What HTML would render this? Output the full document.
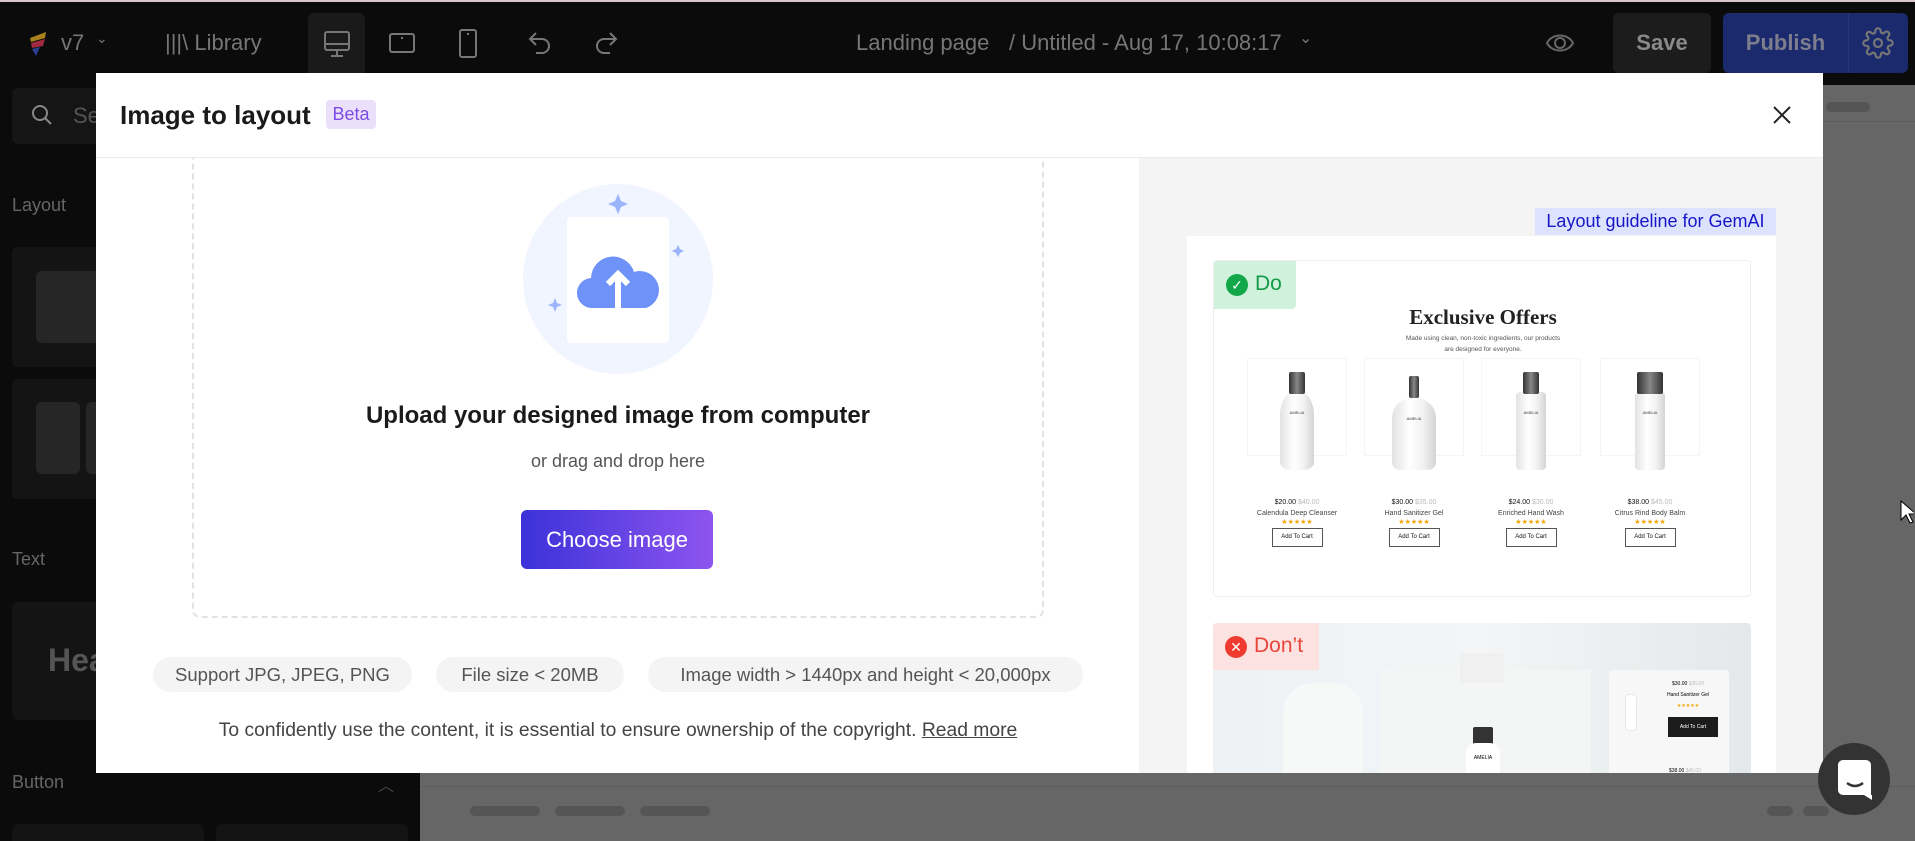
<!DOCTYPE html>
<html style="overflow:hidden;width:1915px;height:841px"><head><meta charset="utf-8"><style>
*{box-sizing:border-box;margin:0;padding:0}
body{width:1915px;height:841px;overflow:hidden;background:#0b0b0b;font-family:"Liberation Sans",sans-serif;position:relative}
.a{position:absolute}
.tb{color:#767676;font-size:22px}
.pill{position:absolute;top:657px;height:35px;border-radius:18px;background:#f4f4f4;color:#555;font-size:18.5px;line-height:35px;text-align:center}
.col{position:absolute;width:102px;text-align:center}
.bot{margin:0 auto;width:34px;height:78px;background:linear-gradient(90deg,#e2e2e2,#fff 40%,#f2f2f2 70%,#d4d4d4);border-radius:12px 12px 6px 6px;position:relative;margin-top:20px;font-size:4px;color:#333;padding-top:18px}
.cap{position:absolute;left:50%;top:-20px;width:16px;height:22px;margin-left:-8px;background:linear-gradient(90deg,#333,#888,#333);border-radius:2px}
.pr{font-size:7px;color:#111;margin-top:29px}
.pr s{color:#bbb;text-decoration:none}
.nm{font-size:7px;color:#444;margin-top:4px}
.st{font-size:7px;color:#f5a400;margin-top:1px}
.btn{margin:2px auto 0;width:51px;height:19px;border:1px solid #555;font-size:6px;line-height:17px;color:#111}
.sb{position:absolute;left:12px;width:400px;background:#141414;border-radius:6px}
.sl{position:absolute;left:12px;color:#666;font-size:18px}
</style></head><body>
<div class="a" style="left:0;top:0;width:1915px;height:2px;background:#d8c8cc"></div>
<!-- top bar -->
<div class="a" style="left:28px;top:30px;width:18px;height:28px">
<svg width="20" height="30" viewBox="0 0 20 30"><path d="M2 8 L18 2 L17 8 L3 12Z" fill="#a8821c"/><path d="M3 13 L17 9 L15 16 L4 18Z" fill="#a02a40"/><path d="M4 19 L12 17 L8 26Z" fill="#2a3f8f"/></svg></div>
<div class="a tb" style="left:61px;top:30px">v7</div>
<div class="a tb" style="left:96px;top:30px;font-size:14px">⌄</div>
<div class="a tb" style="left:165px;top:30px">|||\ Library</div>
<div class="a" style="left:308px;top:13px;width:57px;height:60px;background:#1a1a1a;border-radius:6px 6px 0 0"></div>
<svg class="a" style="left:322px;top:29px" width="30" height="30" viewBox="0 0 30 30" fill="none" stroke="#777" stroke-width="2"><rect x="3" y="3" width="24" height="18" rx="2"/><path d="M3 15H27M15 21V26M9 27H21"/></svg>
<svg class="a" style="left:388px;top:29px" width="28" height="28" viewBox="0 0 28 28" fill="none" stroke="#777" stroke-width="2"><rect x="2" y="5" width="24" height="18" rx="2"/><path d="M13 9h2"/></svg>
<svg class="a" style="left:456px;top:28px" width="24" height="32" viewBox="0 0 24 32" fill="none" stroke="#777" stroke-width="2"><rect x="4" y="2" width="16" height="27" rx="2"/><path d="M11 6h2"/></svg>
<svg class="a" style="left:526px;top:29px" width="28" height="28" viewBox="0 0 28 28" fill="none" stroke="#777" stroke-width="2"><path d="M10 4 L4 10 L10 16M4 10H16a7 7 0 0 1 0 14H10"/></svg>
<svg class="a" style="left:592px;top:29px" width="28" height="28" viewBox="0 0 28 28" fill="none" stroke="#777" stroke-width="2"><path d="M18 4 L24 10 L18 16M24 10H12a7 7 0 0 0 0 14H18"/></svg>
<div class="a tb" style="left:856px;top:30px">Landing page</div>
<div class="a tb" style="left:1009px;top:30px">/ Untitled - Aug 17, 10:08:17</div>
<div class="a tb" style="left:1299px;top:28px;font-size:16px">⌄</div>
<svg class="a" style="left:1545px;top:30px" width="30" height="26" viewBox="0 0 30 26" fill="none" stroke="#666" stroke-width="2"><path d="M2 13C7 3 23 3 28 13C23 23 7 23 2 13Z"/><circle cx="15" cy="13" r="5"/></svg>
<div class="a" style="left:1613px;top:13px;width:98px;height:60px;background:#1c1c1c;border-radius:6px;color:#8a8a8a;font-size:22px;font-weight:bold;line-height:60px;text-align:center">Save</div>
<div class="a" style="left:1723px;top:13px;width:185px;height:60px;background:#1a2a6c;border-radius:6px"></div>
<div class="a" style="left:1848px;top:13px;width:1px;height:60px;background:#23357e"></div>
<div class="a" style="left:1723px;top:13px;width:125px;height:60px;color:#7d7d8d;font-size:22px;font-weight:bold;line-height:60px;text-align:center">Publish</div>
<svg class="a" style="left:1862px;top:27px" width="32" height="32" viewBox="0 0 24 24" fill="none" stroke="#777" stroke-width="1.6"><circle cx="12" cy="12" r="3"/><path d="M19.4 15a1.6 1.6 0 0 0 .3 1.8l.1.1a2 2 0 1 1-2.8 2.8l-.1-.1a1.6 1.6 0 0 0-1.8-.3 1.6 1.6 0 0 0-1 1.5V21a2 2 0 1 1-4 0v-.1a1.6 1.6 0 0 0-1-1.5 1.6 1.6 0 0 0-1.8.3l-.1.1a2 2 0 1 1-2.8-2.8l.1-.1a1.6 1.6 0 0 0 .3-1.8 1.6 1.6 0 0 0-1.5-1H3a2 2 0 1 1 0-4h.1a1.6 1.6 0 0 0 1.5-1 1.6 1.6 0 0 0-.3-1.8l-.1-.1a2 2 0 1 1 2.8-2.8l.1.1a1.6 1.6 0 0 0 1.8.3H9a1.6 1.6 0 0 0 1-1.5V3a2 2 0 1 1 4 0v.1a1.6 1.6 0 0 0 1 1.5 1.6 1.6 0 0 0 1.8-.3l.1-.1a2 2 0 1 1 2.8 2.8l-.1.1a1.6 1.6 0 0 0-.3 1.8V9a1.6 1.6 0 0 0 1.5 1H21a2 2 0 1 1 0 4h-.1a1.6 1.6 0 0 0-1.5 1z"/></svg>
<!-- sidebar -->
<div class="a" style="left:12px;top:88px;width:400px;height:56px;background:#151515;border-radius:6px"></div>
<svg class="a" style="left:30px;top:103px" width="24" height="24" viewBox="0 0 24 24" fill="none" stroke="#888" stroke-width="2"><circle cx="10" cy="10" r="7"/><path d="M15 15l6 6"/></svg>
<div class="a tb" style="left:73px;top:103px;color:#555">Se</div>
<div class="sl" style="top:195px">Layout</div>
<div class="sb" style="top:247px;height:120px"></div>
<div class="a" style="left:36px;top:271px;width:80px;height:72px;background:#262626;border-radius:6px"></div>
<div class="sb" style="top:379px;height:120px"></div>
<div class="a" style="left:36px;top:402px;width:44px;height:72px;background:#262626;border-radius:6px"></div>
<div class="a" style="left:86px;top:402px;width:20px;height:72px;background:#262626;border-radius:6px"></div>
<div class="sl" style="top:549px">Text</div>
<div class="sb" style="top:602px;height:118px"></div>
<div class="a" style="left:48px;top:642px;color:#555;font-size:32px;font-weight:bold">Hea</div>
<div class="sl" style="top:772px">Button</div>
<div class="a" style="left:378px;top:772px;color:#444;font-size:16px">︿</div>
<div class="a" style="left:12px;top:824px;width:192px;height:17px;background:#141414;border-radius:6px 6px 0 0"></div>
<div class="a" style="left:216px;top:824px;width:192px;height:17px;background:#141414;border-radius:6px 6px 0 0"></div>
<!-- canvas -->
<div class="a" style="left:420px;top:85px;width:1495px;height:756px;background:#666"></div>
<div class="a" style="left:420px;top:121px;width:1495px;height:1px;background:#5c5c5c"></div>
<div class="a" style="left:1826px;top:102px;width:44px;height:10px;background:#555;border-radius:5px"></div>
<div class="a" style="left:420px;top:786px;width:1495px;height:1px;background:#5c5c5c"></div>
<div class="a" style="left:470px;top:806px;width:70px;height:10px;background:#555;border-radius:5px"></div>
<div class="a" style="left:555px;top:806px;width:70px;height:10px;background:#555;border-radius:5px"></div>
<div class="a" style="left:640px;top:806px;width:70px;height:10px;background:#555;border-radius:5px"></div>
<div class="a" style="left:1767px;top:806px;width:26px;height:10px;background:#555;border-radius:5px"></div>
<div class="a" style="left:1803px;top:806px;width:26px;height:10px;background:#555;border-radius:5px"></div>
<!-- modal -->
<div class="a" style="left:96px;top:73px;width:1727px;height:700px;background:#fff;overflow:hidden">
 <div class="a" style="left:24px;top:27px;font-size:26px;color:#1a1a1a;font-weight:600">Image to layout</div>
 <div class="a" style="left:230px;top:27px;width:50px;height:29px;background:#ebe0fb;border-radius:4px;color:#7c4ce8;font-size:18px;line-height:29px;text-align:center">Beta</div>
 <svg class="a" style="left:1674px;top:30px" width="24" height="24" viewBox="0 0 24 24" stroke="#222" stroke-width="2"><path d="M4 4L20 20M20 4L4 20"/></svg>
 <div class="a" style="left:0;top:84px;width:1727px;height:1px;background:#ebebeb"></div>
 <div class="a" style="left:96px;top:40px;width:852px;height:505px;border:2px dashed #e2e2e2;border-top:none;border-radius:8px;clip-path:inset(45px -5px -5px -5px)"></div>
 <div class="a" style="left:1043px;top:85px;width:684px;height:615px;background:#f4f4f4"></div>
</div>
<!-- upload -->
<div class="a" style="left:523px;top:184px;width:190px;height:190px;border-radius:50%;background:#f1f5ff"></div>
<div class="a" style="left:567px;top:217px;width:102px;height:126px;background:#fff;border-radius:4px"></div>
<svg class="a" style="left:575px;top:246px" width="88" height="66" viewBox="0 0 88 66"><path d="M18 62a15 15 0 0 1-2-30a22 22 0 0 1 43-6a17 17 0 0 1 12 36Z" fill="#6e92f8"/><path d="M43 62V30M33 38L43 28L53 38" stroke="#fff" stroke-width="6" fill="none"/></svg>
<svg class="a" style="left:0;top:0" width="800" height="400"><g fill="#9bb4fb"><path d="M618 194l3 7 7 3-7 3-3 7-3-7-7-3 7-3z"/><path d="M678 245l2 4 4 2-4 2-2 4-2-4-4-2 4-2z"/><path d="M555 298l2 5 5 2-5 2-2 5-2-5-5-2 5-2z"/></g></svg>
<div class="a" style="left:260px;top:402px;width:716px;text-align:center;font-size:24px;font-weight:bold;color:#1a1a1a">Upload your designed image from computer</div>
<div class="a" style="left:260px;top:451px;width:716px;text-align:center;font-size:18px;color:#555">or drag and drop here</div>
<div class="a" style="left:521px;top:510px;width:192px;height:59px;border-radius:6px;background:linear-gradient(90deg,#3b32d8,#8e54f0);color:#fff;font-size:22px;line-height:59px;text-align:center">Choose image</div>
<div class="pill" style="left:153px;width:259px">Support JPG, JPEG, PNG</div>
<div class="pill" style="left:436px;width:188px">File size &lt; 20MB</div>
<div class="pill" style="left:648px;width:435px">Image width &gt; 1440px and height &lt; 20,000px</div>
<div class="a" style="left:100px;top:720px;width:1036px;text-align:center;font-size:19.3px;color:#444">To confidently use the content, it is essential to ensure ownership of the copyright. <u>Read more</u></div>
<!-- right panel -->
<div class="a" style="left:1535px;top:208px;width:241px;height:27px;background:#dde3fc;color:#1616c8;font-size:18px;line-height:27px;text-align:center">Layout guideline for GemAI</div>
<div class="a" style="left:1187px;top:236px;width:589px;height:537px;background:#fff;overflow:hidden">
 <div class="a" style="left:26px;top:24px;width:538px;height:337px;border:1px solid #eee;border-radius:4px;overflow:hidden">
  <div class="a" style="left:0;top:0;width:82px;height:48px;background:#d0f2dc;border-radius:0 0 4px 0"></div>
  <div class="a" style="left:12px;top:13px;width:22px;height:22px;border-radius:50%;background:#12a84a;color:#fff;font-size:14px;line-height:22px;text-align:center">✓</div>
  <div class="a" style="left:41px;top:11px;font-size:21px;color:#139b47">Do</div>
  <div class="a" style="left:0;top:44px;width:538px;text-align:center;font-family:'Liberation Serif',serif;font-weight:bold;font-size:21px;color:#222">Exclusive Offers</div>
  <div class="a" style="left:0;top:72px;width:538px;text-align:center;font-size:6.5px;color:#555;line-height:11px">Made using clean, non-toxic ingredients, our products<br>are designed for everyone.</div>
  <div class="a" style="left:33px;top:97px;width:100px;height:98px;border:1px solid #f5f5f5"></div>
  <div class="a" style="left:150px;top:97px;width:100px;height:98px;border:1px solid #f5f5f5"></div>
  <div class="a" style="left:267px;top:97px;width:100px;height:98px;border:1px solid #f5f5f5"></div>
  <div class="a" style="left:386px;top:97px;width:100px;height:98px;border:1px solid #f5f5f5"></div>
  <div class="col" style="left:32px;top:111px"><div class="bot" style="border-radius:40% 40% 30% 30%/30% 30% 10% 10%">AMELIA</div><div class="cap" style="top:0"></div><div class="pr">$20.00 <s>$40.00</s></div><div class="nm">Calendula Deep Cleanser</div><div class="st">★★★★★</div><div class="btn">Add To Cart</div></div>
  <div class="col" style="left:149px;top:111px"><div class="bot" style="width:44px;height:72px;margin-top:26px;border-radius:20px 20px 8px 8px">AMELIA</div><div class="cap" style="top:4px;width:10px;margin-left:-5px"></div><div class="pr">$30.00 <s>$35.00</s></div><div class="nm">Hand Sanitizer Gel</div><div class="st">★★★★★</div><div class="btn">Add To Cart</div></div>
  <div class="col" style="left:266px;top:111px"><div class="bot" style="width:30px;border-radius:4px">AMELIA</div><div class="cap" style="top:0"></div><div class="pr">$24.00 <s>$30.00</s></div><div class="nm">Enriched Hand Wash</div><div class="st">★★★★★</div><div class="btn">Add To Cart</div></div>
  <div class="col" style="left:385px;top:111px"><div class="bot" style="width:30px;border-radius:4px">AMELIA</div><div class="cap" style="top:0;width:26px;margin-left:-13px"></div><div class="pr">$38.00 <s>$45.00</s></div><div class="nm">Citrus Rind Body Balm</div><div class="st">★★★★★</div><div class="btn">Add To Cart</div></div>
 </div>
 <div class="a" style="left:26px;top:387px;width:538px;height:200px;border-radius:4px;overflow:hidden;background:linear-gradient(90deg,#eef2f5,#f3f5f6 50%,#e4e8ea)">
  <div class="a" style="left:70px;top:60px;width:80px;height:160px;background:#f7f8f8;border-radius:30px 30px 0 0;opacity:.9"></div>
  <div class="a" style="left:168px;top:47px;width:210px;height:160px;background:#f4f5f5"></div>
  <div class="a" style="left:247px;top:30px;width:44px;height:30px;background:#f0f0f0"></div>
  <div class="a" style="left:260px;top:104px;width:20px;height:18px;background:#333;border-radius:2px"></div>
  <div class="a" style="left:253px;top:120px;width:34px;height:60px;background:#fff;border-radius:10px 10px 0 0;font-size:5px;text-align:center;padding-top:12px">AMELIA</div>
  <div class="a" style="left:396px;top:47px;width:120px;height:107px;background:#f7f7f7;border-radius:3px"></div>
  <div class="a" style="left:413px;top:72px;width:10px;height:35px;background:#fff;border-radius:3px;box-shadow:0 0 1px #999"></div>
  <div class="a" style="left:440px;top:56px;width:70px;text-align:center;font-size:5px;line-height:11px">$30.00 <span style="color:#bbb">$35.00</span><br>Hand Sanitizer Gel<br><span style="color:#f5a400">★★★★★</span></div>
  <div class="a" style="left:455px;top:94px;width:50px;height:20px;background:#1c1c1c;color:#fff;font-size:5px;line-height:20px;text-align:center">Add To Cart</div>
  <div class="a" style="left:396px;top:133px;width:120px;height:80px;background:#f7f7f7;border-radius:3px;font-size:5px;padding:12px 0 0 60px">$38.00 <span style="color:#bbb">$45.00</span></div>
  <div class="a" style="left:0;top:0;width:106px;height:47px;background:#fde2e2"></div>
  <div class="a" style="left:12px;top:13px;width:22px;height:22px;border-radius:50%;background:#ef3b2f;color:#fff;font-size:14px;line-height:22px;text-align:center">✕</div>
  <div class="a" style="left:41px;top:11px;font-size:21px;color:#e8463a">Don’t</div>
 </div>
</div>
<!-- chat bubble -->
<div class="a" style="left:1818px;top:743px;width:72px;height:72px;border-radius:50%;background:#333"></div>
<div class="a" style="left:1838px;top:760px;width:33px;height:35px;background:#fff;border-radius:5px 5px 0 5px"></div>
<svg class="a" style="left:1838px;top:760px" width="40" height="40"><path d="M9 23q8 6 16 0" stroke="#333" stroke-width="2.5" fill="none"/><path d="M26 35h8v5z" fill="#fff"/></svg>
<svg class="a" style="left:1900px;top:500px" width="14" height="24"><path d="M1 1v19l5-5 4 8 3-1-4-8h7z" fill="#fff" stroke="#000"/></svg>
</body></html>
